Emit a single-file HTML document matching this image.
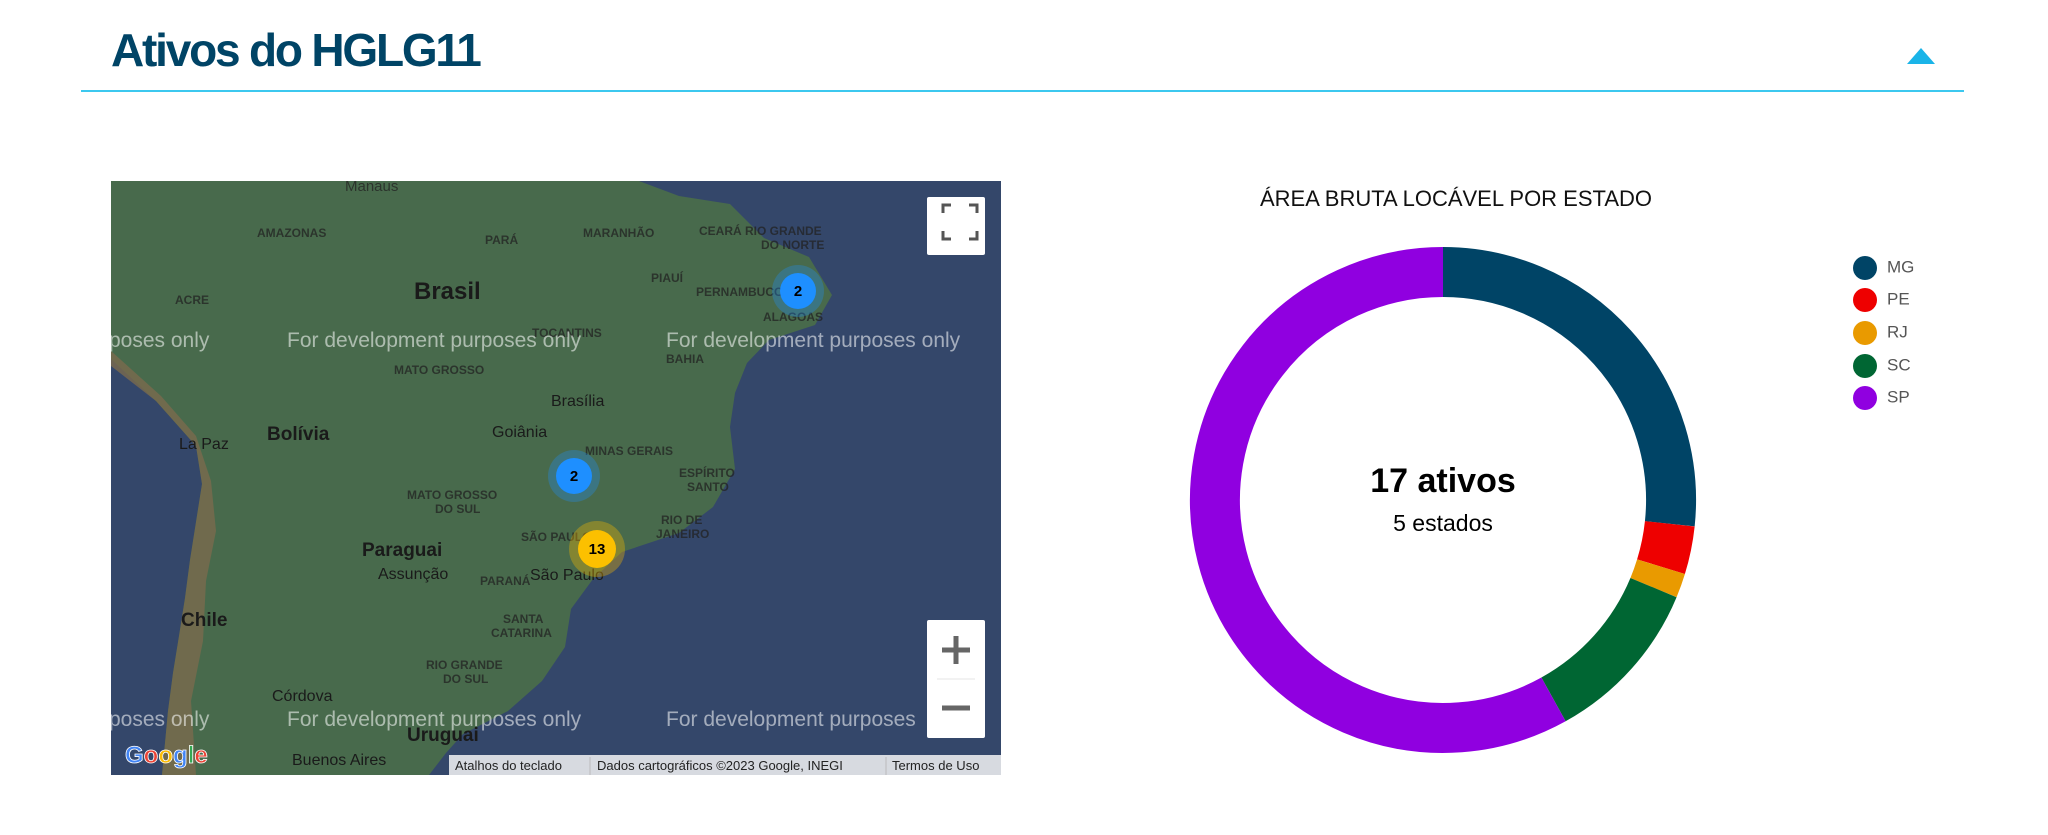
<!DOCTYPE html>
<html><head><meta charset="utf-8"><style>
*{margin:0;padding:0;box-sizing:border-box}
body{width:2048px;height:835px;background:#fff;position:relative;overflow:hidden;font-family:"Liberation Sans",sans-serif}
.title{position:absolute;left:111px;top:23px;font-size:46px;font-weight:bold;color:#004466;letter-spacing:-2.2px}
.line{position:absolute;left:81px;top:90px;width:1883px;height:2px;background:#3cc8ef}
.tri{position:absolute;left:1907px;top:48px;width:0;height:0;border-left:14px solid transparent;border-right:14px solid transparent;border-bottom:16px solid #1ab4e8}
.map{position:absolute;left:111px;top:181px;width:890px;height:594px;overflow:hidden}
.ctitle{position:absolute;left:1256px;top:186px;font-size:22px;color:#111;width:400px;text-align:center}
.c1{position:absolute;left:1243px;top:462px;width:400px;text-align:center;font-size:34px;font-weight:bold;color:#000}
.c2{position:absolute;left:1243px;top:510px;width:400px;text-align:center;font-size:23px;color:#000}
.lg{position:absolute;left:1853px;font-size:17px;color:#555}
.lg i{display:inline-block;width:24px;height:24px;border-radius:50%;vertical-align:middle;margin-right:10px}
</style></head><body>
<div class="title">Ativos do HGLG11</div>
<div class="line"></div>
<div class="tri"></div>
<div class="map">
<svg width="890" height="594" viewBox="0 0 890 594" font-family="Liberation Sans, sans-serif">
<rect width="890" height="594" fill="#34476a"/>
<path d="M0 0 L528 0 568 15 619 23 653 57 698 76 721 114 704 144 658 159 636 182 624 212 619 246 624 288 602 326 568 352 511 371 482 398 460 428 454 466 431 500 397 530 352 553 335 572 318 594 51 594 57 530 62 492 68 455 74 417 79 379 85 341 91 303 85 265 45 220 0 178Z" fill="#486a4c"/>
<path d="M0 185 L45 220 85 265 91 303 85 341 79 379 74 417 68 455 62 492 57 530 51 594 85 594 80 520 92 460 95 400 105 350 100 300 85 255 50 215 0 170Z" fill="#7a6a4e" opacity=".8"/>
<g fill="#222" font-size="12" font-weight="bold" opacity=".75">
<text x="234" y="10" font-size="15" font-weight="normal">Manaus</text>
<text x="146" y="56">AMAZONAS</text><text x="374" y="63">PARÁ</text><text x="472" y="56">MARANHÃO</text>
<text x="588" y="54">CEARÁ RIO GRANDE</text><text x="650" y="68">DO NORTE</text>
<text x="540" y="101">PIAUÍ</text><text x="585" y="115">PERNAMBUCO</text><text x="652" y="140">ALAGOAS</text>
<text x="64" y="123">ACRE</text><text x="421" y="156">TOCANTINS</text><text x="283" y="193">MATO GROSSO</text>
<text x="555" y="182">BAHIA</text><text x="474" y="274">MINAS GERAIS</text><text x="568" y="296">ESPÍRITO</text><text x="576" y="310">SANTO</text>
<text x="296" y="318">MATO GROSSO</text><text x="324" y="332">DO SUL</text><text x="550" y="343">RIO DE</text><text x="545" y="357">JANEIRO</text>
<text x="410" y="360">SÃO PAULO</text><text x="369" y="404">PARANÁ</text><text x="392" y="442">SANTA</text><text x="380" y="456">CATARINA</text>
<text x="315" y="488">RIO GRANDE</text><text x="332" y="502">DO SUL</text>
</g>
<g fill="#1a1a1a" font-weight="bold">
<text x="303" y="118" font-size="24">Brasil</text><text x="156" y="259" font-size="19">Bolívia</text>
<text x="251" y="375" font-size="19">Paraguai</text><text x="70" y="445" font-size="19">Chile</text><text x="296" y="560" font-size="19">Uruguai</text>
<text x="440" y="225" font-size="16" font-weight="normal">Brasília</text><text x="381" y="256" font-size="16" font-weight="normal">Goiânia</text>
<text x="68" y="268" font-size="16" font-weight="normal">La Paz</text><text x="267" y="398" font-size="16" font-weight="normal">Assunção</text>
<text x="419" y="399" font-size="16" font-weight="normal">São Paulo</text><text x="161" y="520" font-size="16" font-weight="normal">Córdova</text>
<text x="181" y="584" font-size="16" font-weight="normal">Buenos Aires</text>
</g>
<g fill="#fff" opacity=".55" font-size="21">
<text x="-2" y="166">poses only</text><text x="176" y="166">For development purposes only</text><text x="555" y="166">For development purposes only</text>
<text x="-2" y="545">poses only</text><text x="176" y="545">For development purposes only</text><text x="555" y="545">For development purposes</text>
</g>
<g>
<circle cx="687" cy="110" r="26" fill="#1e8fff" opacity=".3"/><circle cx="687" cy="110" r="18" fill="#1e8fff"/>
<text x="687" y="115" text-anchor="middle" font-size="15" font-weight="bold">2</text>
<circle cx="463" cy="295" r="26" fill="#1e8fff" opacity=".3"/><circle cx="463" cy="295" r="18" fill="#1e8fff"/>
<text x="463" y="300" text-anchor="middle" font-size="15" font-weight="bold">2</text>
<circle cx="486" cy="368" r="28" fill="#f5b800" opacity=".35"/><circle cx="486" cy="368" r="19" fill="#fcc000"/>
<text x="486" y="373" text-anchor="middle" font-size="15" font-weight="bold">13</text>
</g>
<rect x="816" y="16" width="58" height="58" rx="2" fill="#fff"/>
<path d="M832 40v-8h8M858 32h8v8M866 58v8h-8M840 66h-8v-8" stroke="#555" stroke-width="3" fill="none" transform="translate(0,-8)"/>
<rect x="816" y="439" width="58" height="118" rx="2" fill="#fff"/>
<line x1="826" y1="498" x2="864" y2="498" stroke="#e6e6e6"/>
<path d="M845 455v28M831 469h28M831 527h28" stroke="#666" stroke-width="5"/>
<text x="14" y="582" font-size="24" font-weight="bold" fill="#4285f4" stroke="#fff" stroke-width=".8">G<tspan fill="#ea4335">o</tspan><tspan fill="#fbbc05">o</tspan><tspan fill="#4285f4">g</tspan><tspan fill="#34a853">l</tspan><tspan fill="#ea4335">e</tspan></text>
<rect x="338" y="574" width="552" height="20" fill="#f5f5f5" opacity=".85"/>
<g font-size="13" fill="#222"><text x="344" y="589">Atalhos do teclado</text><text x="486" y="589">Dados cartográficos ©2023 Google, INEGI</text><text x="781" y="589">Termos de Uso</text></g>
<path d="M479 576v18M775 576v18" stroke="#bbb"/>
</svg>
</div>
<div class="ctitle">ÁREA BRUTA LOCÁVEL POR ESTADO</div>
<svg style="position:absolute;left:0;top:0" width="2048" height="835">
<g transform="translate(1443,500)" fill="none" stroke-width="50">
<path d="M0 -228 A228 228 0 0 1 226.8 23.8" stroke="#004466"/>
<path d="M226.8 23.8 A228 228 0 0 1 218 66.7" stroke="#ee0000"/>
<path d="M218 66.7 A228 228 0 0 1 210.5 87.6" stroke="#e99a00"/>
<path d="M210.5 87.6 A228 228 0 0 1 110.5 199.4" stroke="#006633"/>
<path d="M110.5 199.4 A228 228 0 1 1 0 -228" stroke="#9000e0"/>
</g>
</svg>
<div class="c1">17 ativos</div>
<div class="c2">5 estados</div>
<div class="lg" style="top:256px"><i style="background:#004466"></i>MG</div>
<div class="lg" style="top:288px"><i style="background:#ee0000"></i>PE</div>
<div class="lg" style="top:321px"><i style="background:#e99a00"></i>RJ</div>
<div class="lg" style="top:354px"><i style="background:#006633"></i>SC</div>
<div class="lg" style="top:386px"><i style="background:#9000e0"></i>SP</div>
</body></html>
